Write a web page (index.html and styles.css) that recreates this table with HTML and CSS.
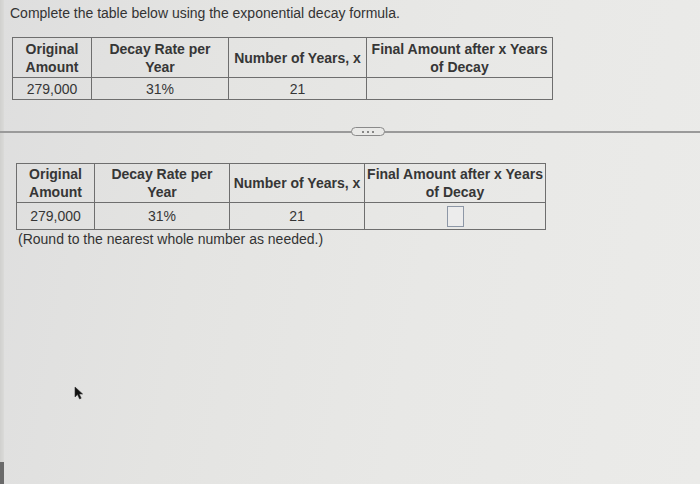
FILE: index.html
```html
<!DOCTYPE html>
<html>
<head>
<meta charset="utf-8">
<link rel="stylesheet" href="styles.css">
</head>
<body>
<div class="screen">
  <div class="edge"></div>
  <div class="content">
    <p class="title">Complete the table below using the exponential decay formula.</p>
    <table class="grid grid-one">
      <colgroup><col class="c1"><col class="c2"><col class="c3"><col class="c4"></colgroup>
      <tr class="head">
        <th>Original<br>Amount</th>
        <th>Decay Rate per<br>Year</th>
        <th>Number of Years, x</th>
        <th>Final Amount after x Years<br>of Decay</th>
      </tr>
      <tr class="data">
        <td>279,000</td>
        <td>31%</td>
        <td>21</td>
        <td></td>
      </tr>
    </table>
    <div class="divider">
      <span class="pill"><i></i><i></i><i></i></span>
    </div>
    <table class="grid grid-two">
      <colgroup><col class="d1"><col class="d2"><col class="d3"><col class="d4"></colgroup>
      <tr class="head">
        <th>Original<br>Amount</th>
        <th>Decay Rate per<br>Year</th>
        <th>Number of Years, x</th>
        <th>Final Amount after x Years<br>of Decay</th>
      </tr>
      <tr class="data">
        <td>279,000</td>
        <td>31%</td>
        <td>21</td>
        <td><span class="answer"></span></td>
      </tr>
    </table>
    <p class="note">(Round to the nearest whole number as needed.)</p>
  </div>
  <svg class="cursor" width="10" height="14" viewBox="0 0 10 14"><path d="M1 1 L1 11 L3.5 8.6 L5.6 13 L7.2 12.2 L5.2 8 L8.6 8 Z" fill="#111" stroke="#333" stroke-width="0.6"/></svg>
  <div class="corner"></div>
</div>
</body>
</html>
```
FILE: styles.css
```css
html, body {
  margin: 0;
  padding: 0;
}
body {
  width: 700px;
  height: 484px;
  overflow: hidden;
  font-family: "Liberation Sans", Arial, sans-serif;
  color: #333;
}
.screen {
  position: relative;
  width: 700px;
  height: 484px;
  background: linear-gradient(100deg, #dedede 0%, #e4e4e2 30%, #e8e8e6 60%, #ebebe9 100%);
  display: flex;
}
.edge {
  width: 4px;
  background: linear-gradient(90deg, #d0d0ce, #dadad8);
  flex: none;
}
.content {
  flex: 1;
  padding: 5px 0 0 6px;
}
.title {
  margin: 0;
  font-size: 14px;
  line-height: 16px;
  color: #333;
}
.grid {
  border-collapse: collapse;
  table-layout: fixed;
  font-size: 14px;
  color: #363636;
}
.grid th, .grid td {
  border: 1px solid #6e6e6e;
  text-align: center;
  padding: 0;
}
.grid th {
  font-weight: bold;
  line-height: 18px;
  height: 39px;
}
.grid td {
  height: 21px;
  line-height: 18px;
}
.grid-one {
  margin: 16px 0 0 2px;
  width: 540px;
}
.c1 { width: 79px; }
.c2 { width: 137px; }
.c3 { width: 138px; }
.c4 { width: 186px; }
.grid-two {
  margin: 0 0 0 6px;
  width: 529px;
}
.d1 { width: 78px; }
.d2 { width: 135px; }
.d3 { width: 135px; }
.d4 { width: 181px; }
.grid-two th {
  height: 38px;
}
.grid-two td {
  height: 26px;
}
.divider {
  margin: 27px 0 27px -10px;
  height: 9px;
  width: 700px;
  display: flex;
  align-items: center;
  justify-content: flex-start;
  background: linear-gradient(#9a9a9a, #9a9a9a) center / 100% 2px no-repeat;
}
.pill {
  width: 32px;
  height: 7px;
  border: 1px solid #8a8a8a;
  border-radius: 5px;
  background: #e9e9e7;
  display: flex;
  gap: 3px;
  align-items: center;
  justify-content: center;
  margin-left: 351px;
}
.pill i {
  width: 2px;
  height: 2px;
  background: #666;
  border-radius: 1px;
}
.answer {
  display: inline-block;
  width: 15px;
  height: 19px;
  border: 1px solid #8d97a6;
  background: #ececec;
  vertical-align: middle;
  margin-top: 1px;
}
.note {
  margin: 0 0 0 8px;
  font-size: 14px;
  line-height: 18px;
  color: #333;
}
.cursor {
  position: absolute;
  left: 74px;
  top: 386px;
}
.corner {
  position: absolute;
  left: 0;
  top: 462px;
  width: 4px;
  height: 22px;
  background: #6a6a6a;
}
```
